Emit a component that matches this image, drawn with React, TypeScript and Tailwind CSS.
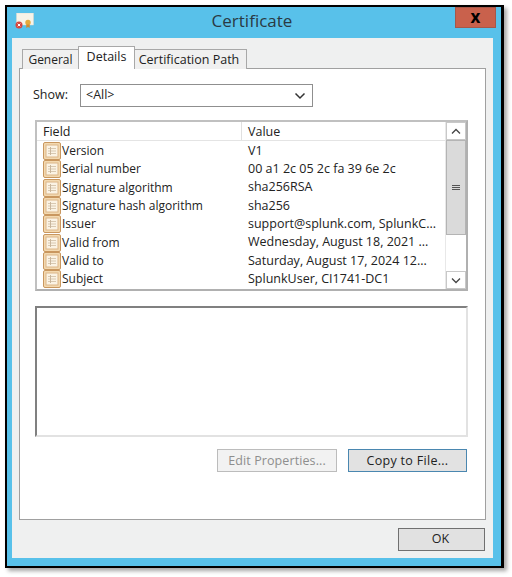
const FIELDS = [
  ["Version", "V1"],
  ["Serial number", "00 a1 2c 05 2c fa 39 6e 2c"],
  ["Signature algorithm", "sha256RSA"],
  ["Signature hash algorithm", "sha256"],
  ["Issuer", "support@splunk.com, SplunkC..."],
  ["Valid from", "Wednesday, August 18, 2021 ..."],
  ["Valid to", "Saturday, August 17, 2024 12..."],
  ["Subject", "SplunkUser, CI1741-DC1"],
]

function FieldIcon() {
  return (
    <svg width="18" height="18" viewBox="0 0 18 18" className="shrink-0">
      <rect x="0.5" y="0.5" width="17" height="17" rx="1.5" fill="#f3d9b0" stroke="#c9975f" />
      <rect x="3" y="3" width="12" height="12" fill="#fbf3e4" stroke="#dcb688" />
      <path d="M5 6.5h8M5 9h8M5 11.5h8" stroke="#d8c8b0" strokeWidth="1" fill="none" />
      <path d="M7.5 5v8" stroke="#c9b69c" strokeWidth="1" fill="none" />
    </svg>
  )
}

function WindowIcon() {
  return (
    <svg width="19" height="16" viewBox="0 0 19 16">
      <rect x="1.5" y="0" width="17" height="12" fill="#f7f3e8" stroke="#dcd8cc" strokeWidth="0.5" />
      <circle cx="4" cy="12" r="3.5" fill="#d6453d" />
      <path d="M2.7 10.7l2.6 2.6M5.3 10.7l-2.6 2.6" stroke="#fff" strokeWidth="1" />
      <circle cx="13" cy="9.5" r="2.7" fill="#e5a93a" />
      <path d="M11.3 11.5v3.5l1.7-1 1.7 1v-3.5" fill="#d58a2c" />
    </svg>
  )
}

export default function App() {
  return (
    <div className="h-[577px] w-[512px] overflow-hidden bg-white pl-[5px] pt-[5px] font-['Open_Sans','Noto_Sans',sans-serif] text-[12px] text-[#222]">
      <div className="h-[563px] w-[499px] border-2 border-r-[3px] border-black bg-[#58c1ea] shadow-[3px_3px_4px_rgba(0,0,0,0.35)]">
        <div className="flex h-[31px] items-start">
          <div className="ml-[8px] mt-[6px] w-[19px]">
            <WindowIcon />
          </div>
          <div className="flex-1 pl-[15px] pt-[2px] text-center text-[17px] leading-[24px] text-[#2a3a44]">Certificate</div>
          <div className="mr-[5px] flex h-[21px] w-[41px] items-center justify-center border border-[#a5584a] bg-[#c9614c] pb-[2px] text-[17px] font-bold leading-none text-black">
            x
          </div>
        </div>

        <div className="ml-[5px] h-[520px] w-[481px] bg-[#eff0f0] px-[7px] pt-[8px]">
          <div className="relative z-10 flex h-[23px] items-end pl-[3px] text-[12.5px]">
            <div className="h-[20px] w-[57px] border border-b-0 border-[#a8a8a8] bg-[#f0f0f0] text-center text-[12px] leading-[20px]">General</div>
            <div className="-ml-px h-[23px] w-[57px] border border-b-0 border-[#a8a8a8] bg-white text-center leading-[20px]">Details</div>
            <div className="-ml-px h-[20px] w-[113px] border border-b-0 border-[#a8a8a8] bg-[#f0f0f0] pr-[3px] text-center leading-[20px]">Certification Path</div>
          </div>

          <div className="-mt-px h-[452px] w-[467px] border border-[#a0a0a0] bg-white px-[15px] pt-[15px]">
            <div className="flex items-center">
              <span className="-ml-[2px] w-[47px] text-[12.5px]">Show:</span>
              <div className="flex h-[23px] w-[233px] items-center justify-between border border-[#8f8f8f] pl-[5px] pr-[6px] text-[12.5px]">
                <span>&lt;All&gt;</span>
                <svg width="12" height="8" viewBox="0 0 12 8">
                  <path d="M1.5 1.5L6 6l4.5-4.5" stroke="#333" strokeWidth="1.5" fill="none" />
                </svg>
              </div>
            </div>

            <div className="mt-[13px] flex h-[171px] w-[433px] border-2 border-[#c0c0c0] border-b-[#b0b0b0] border-r-[#b0b0b0] text-[12.5px]">
              <div className="min-w-0 flex-1">
                <div className="flex h-[19px] border-b border-[#e4e4e4] leading-[20px]">
                  <div className="w-[205px] border-r border-[#e0e0e0] pl-[6px]">Field</div>
                  <div className="pl-[6px]">Value</div>
                </div>
                <div className="pt-[1px]">
                  {FIELDS.map(([field, value]) => (
                    <div key={field} className="flex h-[18.3px] items-center">
                      <div className="flex w-[205px] items-center gap-[1px] pl-[6px]">
                        <FieldIcon />
                        <span className="whitespace-nowrap text-[12px]">{field}</span>
                      </div>
                      <span className="whitespace-nowrap pl-[6px]">{value}</span>
                    </div>
                  ))}
                </div>
              </div>
              <div className="flex w-[21px] shrink-0 flex-col border-l border-[#e8e8e8]">
                <div className="flex h-[18px] items-center justify-center border border-[#c8c8c8]">
                  <svg width="10" height="7" viewBox="0 0 10 7">
                    <path d="M1 5.5L5 1.5l4 4" stroke="#444" strokeWidth="1.3" fill="none" />
                  </svg>
                </div>
                <div className="flex h-[95px] flex-col items-center justify-center gap-[1px] border border-[#b4b4b4] bg-[#dadada]">
                  <div className="h-px w-[8px] bg-[#555]" />
                  <div className="h-px w-[8px] bg-[#555]" />
                  <div className="h-px w-[8px] bg-[#555]" />
                </div>
                <div className="flex-1" />
                <div className="flex h-[18px] items-center justify-center border border-[#c8c8c8]">
                  <svg width="10" height="7" viewBox="0 0 10 7">
                    <path d="M1 1.5L5 5.5l4-4" stroke="#444" strokeWidth="1.3" fill="none" />
                  </svg>
                </div>
              </div>
            </div>

            <div className="mt-[15px] h-[131px] w-[433px] border-2 border-[#e2e2e2] border-l-[#808080] border-t-[#808080]" />

            <div className="mt-[12px] flex w-[432px] justify-end gap-[11px] text-[12.5px]">
              <div className="flex h-[23px] w-[120px] items-center justify-center border border-[#bcbcbc] bg-[#f2f2f2] pt-[1px] tracking-[0.1px] text-[#8e8e8e]">Edit Properties...</div>
              <div className="flex h-[23px] w-[119px] items-center justify-center border border-[#4a87b0] bg-[#e2e2e2] pt-[1px] tracking-[0.3px]">Copy to File...</div>
            </div>
          </div>

          <div className="ml-auto mt-[8px] mr-[1px] flex h-[23px] w-[87px] items-center justify-center border border-[#707070] bg-[#e1e1e1] pr-[2px] text-[12.5px]">
            OK
          </div>
        </div>
      </div>
    </div>
  )
}
